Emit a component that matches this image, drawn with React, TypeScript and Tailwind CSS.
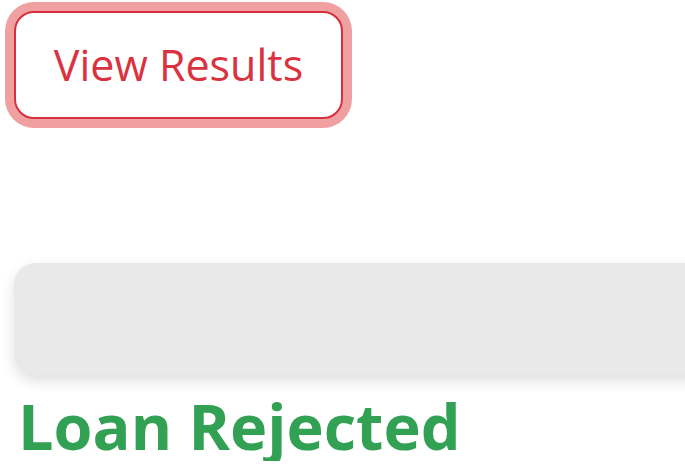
import React from 'react';

export default function App() {
  return (
    <div className="w-[685px] overflow-x-hidden bg-white pl-[14px] pt-[11px] pb-[4px] font-['Open_Sans',sans-serif]">
      {/* Button */}
      <button className="flex h-[108px] w-[329px] items-center justify-center rounded-[20px] border-[2.5px] border-[#d6303c] bg-white text-[43px] text-[#d9333f] shadow-[0_0_0_9px_#f0a0a0]">
        View Results
      </button>

      {/* Result box */}
      <div className="mt-[144px] h-[112px] w-[760px] rounded-[22px] bg-[#e9e9e9] shadow-[0_6px_14px_rgba(0,0,0,0.13)]" />

      <h2 className="mt-[19px] pl-[4px] text-[63px] leading-none font-bold text-[#33a153]">
        Loan Rejected
      </h2>
    </div>
  );
}
